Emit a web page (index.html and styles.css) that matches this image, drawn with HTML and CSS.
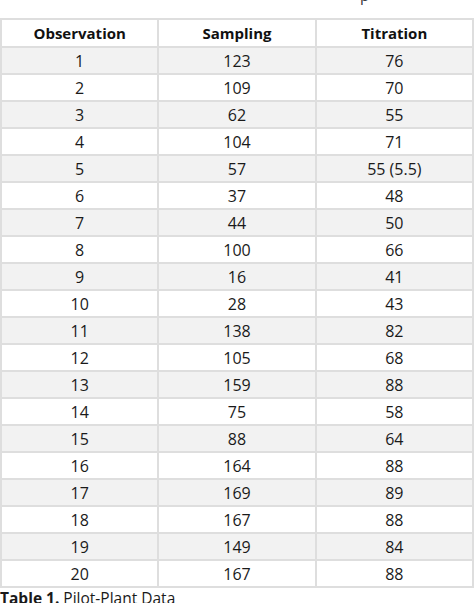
FILE: index.html
```html
<!DOCTYPE html>
<html>
<head>
<meta charset="utf-8">
<link rel="stylesheet" href="styles.css">
</head>
<body>
<div class="clip"><div class="clip-text">p</div></div>
<table class="data">
<thead>
<tr><th>Observation</th><th>Sampling</th><th>Titration</th></tr>
</thead>
<tbody>
<tr><td>1</td><td>123</td><td>76</td></tr>
<tr><td>2</td><td>109</td><td>70</td></tr>
<tr><td>3</td><td>62</td><td>55</td></tr>
<tr><td>4</td><td>104</td><td>71</td></tr>
<tr><td>5</td><td>57</td><td>55 (5.5)</td></tr>
<tr><td>6</td><td>37</td><td>48</td></tr>
<tr><td>7</td><td>44</td><td>50</td></tr>
<tr><td>8</td><td>100</td><td>66</td></tr>
<tr><td>9</td><td>16</td><td>41</td></tr>
<tr><td>10</td><td>28</td><td>43</td></tr>
<tr><td>11</td><td>138</td><td>82</td></tr>
<tr><td>12</td><td>105</td><td>68</td></tr>
<tr><td>13</td><td>159</td><td>88</td></tr>
<tr><td>14</td><td>75</td><td>58</td></tr>
<tr><td>15</td><td>88</td><td>64</td></tr>
<tr><td>16</td><td>164</td><td>88</td></tr>
<tr><td>17</td><td>169</td><td>89</td></tr>
<tr><td>18</td><td>167</td><td>88</td></tr>
<tr><td>19</td><td>149</td><td>84</td></tr>
<tr><td>20</td><td>167</td><td>88</td></tr>
</tbody>
</table>
<div class="caption"><b>Table 1.</b> Pilot-Plant Data</div>
</body>
</html>
```
FILE: styles.css
```css
html, body {
  margin: 0;
  padding: 0;
  background: #fff;
  overflow: hidden;
}
body {
  font-family: "Open Sans", "DejaVu Sans", sans-serif;
  color: #1a1a1a;
}
.clip {
  height: 18px;
  overflow: hidden;
}
.clip-text {
  margin-top: -14px;
  padding-left: 360px;
  font-size: 15px;
  line-height: 18px;
  color: #333;
}
.data {
  width: 474px;
  border-collapse: collapse;
  table-layout: fixed;
  font-size: 16px;
}
.data th, .data td {
  border: 2px solid #dedede;
  text-align: center;
  padding: 0;
}
.data th {
  height: 26px;
  font-size: 15px;
  font-weight: 700;
  color: #111;
  background: #fff;
}
.data td {
  height: 25px;
  color: #1a1a1a;
}
.data tbody tr:nth-child(odd) td {
  background: #f2f2f2;
}
.caption {
  font-size: 15.5px;
  line-height: 20px;
  padding-top: 0;
  color: #1a1a1a;
}
```
